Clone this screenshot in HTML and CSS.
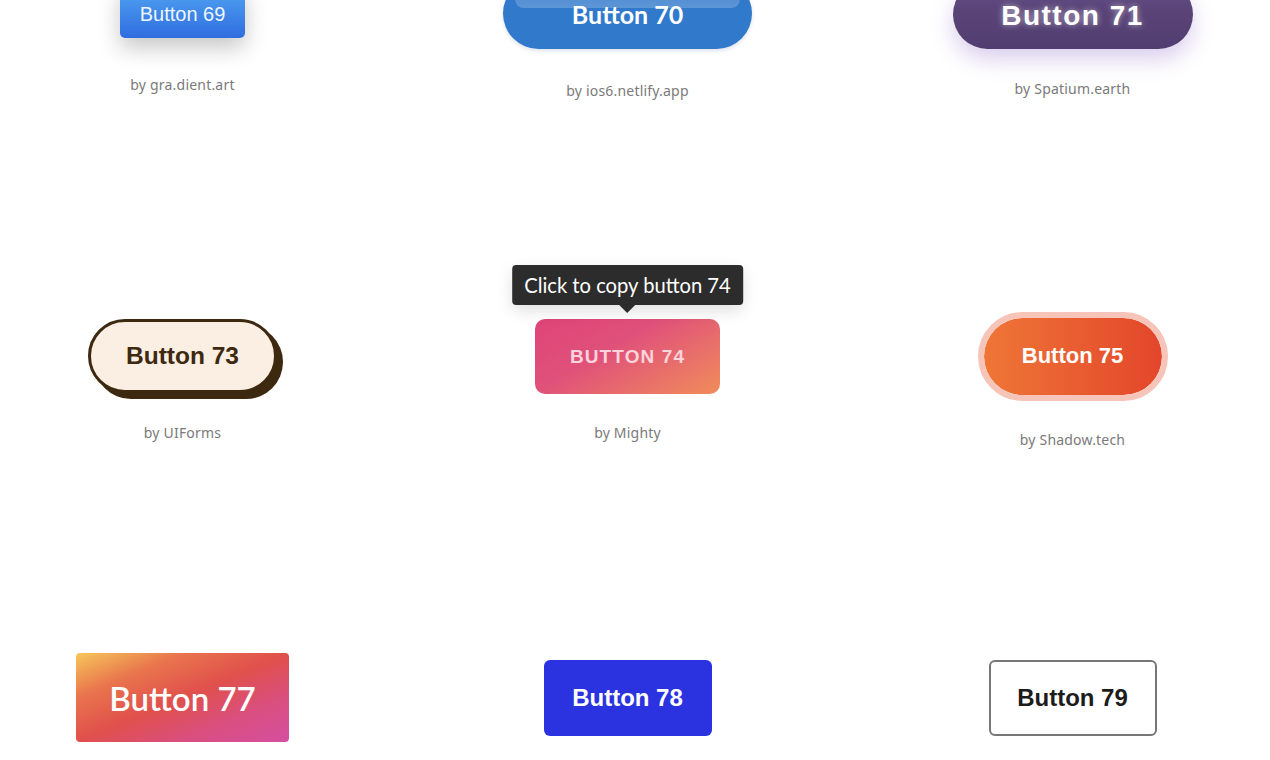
FILE: index.html
```html
<!DOCTYPE html>
<html lang="en">
<head>
<meta charset="utf-8">
<title>Buttons</title>
<link rel="stylesheet" href="styles.css">
</head>
<body>
<main class="grid">
  <div class="cell">
    <button class="btn b69">Button 69</button>
    <p class="credit c69">by gra.dient.art</p>
  </div>
  <div class="cell">
    <button class="btn b70">Button 70</button>
    <p class="credit c70">by ios6.netlify.app</p>
  </div>
  <div class="cell">
    <button class="btn b71">Button 71</button>
    <p class="credit c71">by Spatium.earth</p>
  </div>

  <div class="cell">
    <button class="btn b73">Button 73</button>
    <p class="credit">by UIForms</p>
  </div>
  <div class="cell">
    <div class="tip-wrap">
      <span class="tooltip">Click to copy button 74</span>
      <button class="btn b74">Button 74</button>
    </div>
    <p class="credit c74">by Mighty</p>
  </div>
  <div class="cell">
    <button class="btn b75">Button 75</button>
    <p class="credit c75">by Shadow.tech</p>
  </div>

  <div class="cell cell-last">
    <button class="btn b77">Button 77</button>
  </div>
  <div class="cell cell-last">
    <button class="btn b78">Button 78</button>
  </div>
  <div class="cell cell-last">
    <button class="btn b79">Button 79</button>
  </div>
</main>
</body>
</html>
```
FILE: styles.css
```css
html, body {
  margin: 0;
  padding: 0;
  background: #ffffff;
  overflow: hidden;
}

.grid {
  display: grid;
  grid-template-columns: repeat(3, 365px);
  grid-auto-rows: 341px;
  column-gap: 80px;
  margin-top: -131px;
}

.cell {
  display: flex;
  flex-direction: column;
  align-items: center;
  justify-content: center;
}

.cell-last {
  padding-bottom: 48px;
}

.credit {
  margin: 30px 0 0;
  font-family: "Noto Sans", "Lato", sans-serif;
  font-size: 14px;
  line-height: 20px;
  color: #7a7a7a;
  letter-spacing: 0.2px;
}

.c69 { margin-top: 37px; }
.c70 { margin-top: 32px; }
.c71 { margin-top: 30px; }
.c74 { margin-top: 29px; }
.c75 { margin-top: 29px; }

.btn {
  box-sizing: border-box;
  display: flex;
  align-items: center;
  justify-content: center;
  border: none;
  padding: 0;
  margin: 0;
  cursor: pointer;
  font-family: "Liberation Sans", Arial, sans-serif;
}

/* 69 */
.b69 {
  width: 125px;
  height: 54px;
  border-radius: 5px;
  background: linear-gradient(to bottom, #53a8f2, #2f6de0);
  color: #eef6ff;
  font-size: 20px;
  padding-top: 6px;
  box-shadow: 0 10px 22px rgba(0, 0, 0, 0.22);
}

/* 70 */
.b70 {
  position: relative;
  width: 249px;
  height: 71px;
  border-radius: 36px;
  background: #3079cb;
  color: #ffffff;
  font-family: "Lato", "Noto Sans", sans-serif;
  font-weight: 700;
  font-size: 25px;
  box-shadow: 0 2px 4px rgba(20, 60, 120, 0.15);
  overflow: hidden;
}
.b70::before {
  content: "";
  position: absolute;
  left: 12px;
  right: 12px;
  top: 2px;
  height: 28px;
  border-radius: 30px 30px 14px 14px;
  background: linear-gradient(to bottom, rgba(255,255,255,0.08), rgba(255,255,255,0.22));
}
.b70 span { position: relative; }

/* 71 */
.b71 {
  width: 240px;
  height: 69px;
  border-radius: 35px;
  background: linear-gradient(to bottom, #6a5890, #5a4478 40%, #523d70);
  color: #ffffff;
  font-weight: 700;
  font-size: 28px;
  letter-spacing: 1.5px;
  padding-top: 2px;
  text-shadow: 0 0 6px rgba(255, 255, 255, 0.55);
  box-shadow: 0 10px 22px rgba(120, 80, 190, 0.28);
}

/* 73 */
.b73 {
  width: 189px;
  height: 74px;
  border: 3px solid #3d2910;
  border-radius: 37px;
  background: #fbeee3;
  color: #3d2910;
  font-weight: 700;
  font-size: 24.5px;
  box-shadow: 6px 6px 0 #3d2910;
}

/* 74 */
.tip-wrap {
  position: relative;
  display: flex;
  justify-content: center;
}
.b74 {
  width: 185px;
  height: 75px;
  border-radius: 10px;
  background: linear-gradient(150deg, #df4479 0%, #e0517a 40%, #f08d5a 100%);
  color: #fdd3dc;
  font-weight: 700;
  font-size: 19px;
  letter-spacing: 1.1px;
  text-transform: uppercase;
  padding-top: 2px;
}
.tooltip {
  position: absolute;
  bottom: calc(100% + 14px);
  left: 50%;
  transform: translateX(-50%);
  white-space: nowrap;
  background: #2c2c2c;
  color: #ffffff;
  font-family: "Lato", "Noto Sans", sans-serif;
  font-size: 20.2px;
  line-height: 40px;
  padding: 0 12.5px;
  border-radius: 4px;
  box-shadow: 0 6px 16px rgba(0, 0, 0, 0.12);
}
.tooltip::after {
  content: "";
  position: absolute;
  top: 100%;
  left: 50%;
  margin-left: -8px;
  border-left: 8px solid transparent;
  border-right: 8px solid transparent;
  border-top: 8px solid #2c2c2c;
}

/* 75 */
.b75 {
  width: 190px;
  height: 89px;
  border: 6px solid #f7c4b9;
  border-radius: 45px;
  background: linear-gradient(to right, #ef7637, #e3462b) padding-box;
  color: #ffffff;
  font-weight: 700;
  font-size: 22px;
}

/* 77 */
.b77 {
  width: 213px;
  height: 89px;
  border-radius: 4px;
  background: linear-gradient(to bottom right, #f6c85a 0%, #e9754d 25%, #e0504c 50%, #d94f80 75%, #d54fa0 100%);
  color: #ffffff;
  font-family: "Lato", "Noto Sans", sans-serif;
  font-weight: 600;
  font-size: 33px;
}

/* 78 */
.b78 {
  width: 168px;
  height: 76px;
  border-radius: 6px;
  background: #2b33e1;
  color: #ffffff;
  font-weight: 700;
  font-size: 24px;
}

/* 79 */
.b79 {
  width: 168px;
  height: 76px;
  border: 2px solid #777777;
  border-radius: 6px;
  background: #ffffff;
  color: #1c1c1c;
  font-weight: 700;
  font-size: 24px;
}
```
